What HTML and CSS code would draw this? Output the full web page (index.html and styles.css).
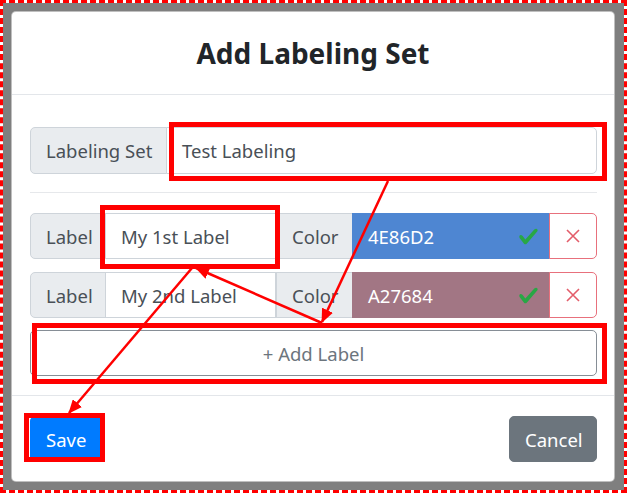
FILE: index.html
```html
<!DOCTYPE html>
<html>
<head>
<meta charset="utf-8">
<title>Add Labeling Set</title>
<link rel="stylesheet" href="styles.css">
</head>
<body>
<div class="frame">
  <div class="backdrop">
    <div class="modal">
      <div class="modal-header">
        <h5 class="modal-title">Add Labeling Set</h5>
      </div>
      <div class="modal-body">
        <div class="input-group set-group">
          <span class="addon addon-set">Labeling Set</span>
          <div class="field field-grow">Test Labeling</div>
        </div>
        <hr class="sep">
        <div class="input-group label-row">
          <span class="addon addon-label">Label</span>
          <div class="field field-name">My 1st Label</div>
          <span class="addon addon-color">Color</span>
          <div class="field color-field color-blue">
            <span class="color-code">4E86D2</span>
            <svg class="check" viewBox="0 0 8 8" width="21" height="21"><path fill="#28a745" d="M2.3 6.73L.6 4.53c-.4-1.04.46-1.4 1.1-.8l1.1 1.4 3.4-3.8c.6-.63 1.6-.27 1.2.7l-4 4.6c-.43.5-.8.4-1.1.1z"/></svg>
          </div>
          <button class="remove" type="button">
            <svg viewBox="0 0 14 14" width="14" height="14"><path d="M1 1L13 13M13 1L1 13" stroke="#e35d6a" stroke-width="1.6" fill="none"/></svg>
          </button>
        </div>
        <div class="input-group label-row">
          <span class="addon addon-label">Label</span>
          <div class="field field-name">My 2nd Label</div>
          <span class="addon addon-color">Color</span>
          <div class="field color-field color-mauve">
            <span class="color-code">A27684</span>
            <svg class="check" viewBox="0 0 8 8" width="21" height="21"><path fill="#28a745" d="M2.3 6.73L.6 4.53c-.4-1.04.46-1.4 1.1-.8l1.1 1.4 3.4-3.8c.6-.63 1.6-.27 1.2.7l-4 4.6c-.43.5-.8.4-1.1.1z"/></svg>
          </div>
          <button class="remove" type="button">
            <svg viewBox="0 0 14 14" width="14" height="14"><path d="M1 1L13 13M13 1L1 13" stroke="#e35d6a" stroke-width="1.6" fill="none"/></svg>
          </button>
        </div>
        <button class="add-label" type="button">+ Add Label</button>
      </div>
      <div class="modal-footer">
        <button class="btn btn-save" type="button">Save</button>
        <button class="btn btn-cancel" type="button">Cancel</button>
      </div>
    </div>
  </div>
  <svg class="annotations" width="627" height="493" viewBox="0 0 627 493">
    <defs>
      <marker id="ah" markerWidth="14" markerHeight="12" refX="13" refY="6" orient="auto" markerUnits="userSpaceOnUse">
        <path d="M0,0 L14,6 L0,12 z" fill="#ff0000"/>
      </marker>
    </defs>
    <g fill="none" stroke="#ff0000" stroke-width="5">
      <rect x="171.5" y="124.5" width="433" height="54"/>
      <rect x="102.5" y="207.5" width="175" height="59"/>
      <rect x="34.5" y="325.5" width="570" height="56"/>
      <rect x="26.5" y="415.5" width="76" height="44"/>
    </g>
    <g stroke="#ff0000" stroke-width="2.5" fill="none">
      <line x1="388" y1="181" x2="322" y2="322" marker-end="url(#ah)"/>
      <line x1="322" y1="323" x2="196" y2="268" marker-end="url(#ah)"/>
      <line x1="192" y1="268" x2="69" y2="413" marker-end="url(#ah)"/>
    </g>
  </svg>
</div>
</body>
</html>
```
FILE: styles.css
```css
* {
  box-sizing: border-box;
}

html, body {
  margin: 0;
  padding: 0;
}

body {
  width: 627px;
  height: 493px;
  overflow: hidden;
  font-family: "Noto Sans", "Open Sans", sans-serif;
  background: #ffffff;
}

.frame {
  position: relative;
  width: 627px;
  height: 493px;
  border: 3px dashed #ff0000;
  background: #ffffff;
}

.backdrop {
  height: 100%;
  background: #7f7f7f;
  padding: 8px 9px 8px 8px;
}

.modal {
  height: 100%;
  background: #ffffff;
  border: 1px solid rgba(0, 0, 0, 0.25);
  border-radius: 5px;
  display: flex;
  flex-direction: column;
}

.modal-header {
  height: 83px;
  border-bottom: 1px solid #e3e6ea;
  display: flex;
  align-items: center;
  justify-content: center;
  padding-top: 2px;
}

.modal-title {
  margin: 0;
  font-size: 28px;
  font-weight: 700;
  color: #212529;
  line-height: 1.2;
}

.modal-body {
  flex: 1;
  padding: 32px 17px 19px 18px;
  display: flex;
  flex-direction: column;
}

.input-group {
  display: flex;
  align-items: stretch;
  font-size: 18.5px;
  color: #495057;
}

.set-group {
  height: 47px;
}

.label-row {
  height: 46px;
  margin-bottom: 13px;
}

.addon,
.field {
  display: flex;
  align-items: center;
  border: 1px solid #ced4da;
  padding: 0 15px;
  white-space: nowrap;
}

.addon {
  background: #e9ecef;
}

.field {
  background: #ffffff;
  margin-left: -1px;
}

.input-group > :first-child {
  border-radius: 5px 0 0 5px;
}

.input-group > :last-child {
  border-radius: 0 5px 5px 0;
}

.addon-set {
  width: 137px;
}

.field-grow {
  flex: 1;
}

.addon-label {
  width: 76px;
}

.field-name {
  width: 171px;
}

.addon-color {
  width: 77px;
}

.color-field {
  flex: 1;
  justify-content: space-between;
  color: #ffffff;
  padding-right: 10px;
}

.color-blue {
  background: #4e86d2;
  border-color: #4e86d2;
}

.color-mauve {
  background: #a27684;
  border-color: #a27684;
}

.check {
  display: block;
}

.remove {
  width: 48px;
  margin-left: -1px;
  border: 1px solid #e8707c;
  background: #ffffff;
  display: flex;
  align-items: center;
  justify-content: center;
  padding: 0;
}

.sep {
  margin: 18px 0 20px;
  border: 0;
  border-top: 1px solid #e6e8eb;
  height: 0;
}

.add-label {
  margin-top: -1px;
  height: 46px;
  width: 100%;
  border: 1px solid #868e96;
  border-radius: 5px;
  background: #ffffff;
  color: #6c757d;
  font-family: inherit;
  font-size: 18.5px;
}

.modal-footer {
  border-top: 1px solid #e3e6ea;
  padding: 20px 17px 19px 18px;
  display: flex;
  justify-content: space-between;
  align-items: center;
}

.btn {
  height: 46px;
  border: 1px solid transparent;
  border-radius: 5px;
  font-family: inherit;
  font-size: 18.5px;
  color: #ffffff;
  padding: 0 15px;
}

.btn-save {
  background: #007bff;
  border-color: #007bff;
  width: 72px;
}

.btn-cancel {
  background: #6c757d;
  border-color: #6c757d;
  width: 88px;
}

.annotations {
  position: absolute;
  left: -3px;
  top: -3px;
  pointer-events: none;
}
```
